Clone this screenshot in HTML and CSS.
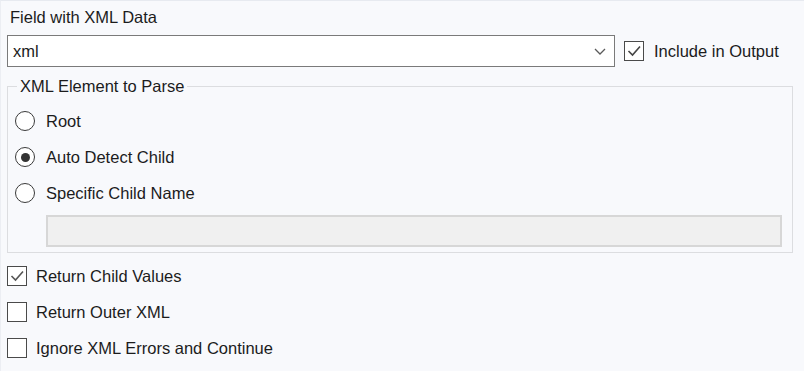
FILE: index.html
```html
<!DOCTYPE html>
<html>
<head>
<meta charset="utf-8">
<link rel="stylesheet" href="styles.css">
</head>
<body>
<div class="panel">
  <div class="field-label">Field with XML Data</div>
  <div class="combo-row">
    <div class="combo">
      <span class="combo-value">xml</span>
      <svg class="chevron" width="12" height="7" viewBox="0 0 12 7"><polyline points="1,1 6,6 11,1" fill="none" stroke="#5a5a5a" stroke-width="1.3"/></svg>
    </div>
    <label class="check">
      <span class="box"><svg width="18" height="18" viewBox="0 0 18 18"><polyline points="3.5,9 7.5,13 15,4.5" fill="none" stroke="#444" stroke-width="1.6"/></svg></span>
      <span class="check-text">Include in Output</span>
    </label>
  </div>
  <fieldset class="group">
    <legend class="group-title">XML Element to Parse</legend>
    <div class="radio"><span class="circle"></span><span class="radio-text">Root</span></div>
    <div class="radio"><span class="circle on"></span><span class="radio-text">Auto Detect Child</span></div>
    <div class="radio"><span class="circle"></span><span class="radio-text">Specific Child Name</span></div>
    <div class="child-input"></div>
  </fieldset>
  <div class="options">
    <label class="check">
      <span class="box"><svg width="18" height="18" viewBox="0 0 18 18"><polyline points="3.5,9 7.5,13 15,4.5" fill="none" stroke="#555" stroke-width="1.6"/></svg></span>
      <span class="check-text">Return Child Values</span>
    </label>
    <label class="check">
      <span class="box"></span>
      <span class="check-text">Return Outer XML</span>
    </label>
    <label class="check">
      <span class="box"></span>
      <span class="check-text">Ignore XML Errors and Continue</span>
    </label>
  </div>
</div>
</body>
</html>
```
FILE: styles.css
```css
html, body {
  margin: 0;
  padding: 0;
  background: #f8f9fc;
}
body {
  width: 804px;
  height: 371px;
  overflow: hidden;
  font-family: "Liberation Sans", Arial, sans-serif;
  font-size: 16.5px;
  color: #1c1c1c;
}
.panel {
  box-sizing: border-box;
  height: 371px;
  border-top: 1px solid #e7eaf0;
  border-left: 1px solid #eceef3;
  padding: 0 0 0 6px;
}
.field-label {
  margin-left: 3px;
  height: 18px;
  line-height: 18px;
  margin-top: 7px;
}
.combo-row {
  display: flex;
  align-items: center;
  margin-top: 9px;
  height: 32px;
}
.combo {
  box-sizing: border-box;
  width: 608px;
  height: 32px;
  background: #fff;
  border: 1px solid #7a7a7a;
  display: flex;
  align-items: center;
  padding-left: 5px;
}
.combo-value {
  flex: 1;
}
.chevron {
  margin-right: 8px;
}
.check {
  display: flex;
  align-items: center;
}
.combo-row .check {
  margin-left: 9px;
}
.box {
  box-sizing: border-box;
  width: 20px;
  height: 20px;
  border: 1.5px solid #4a4a4a;
  background: #fff;
  display: flex;
  align-items: center;
  justify-content: center;
}
.check-text {
  margin-left: 10px;
}
.options .check-text {
  margin-left: 9px;
}
.group {
  box-sizing: border-box;
  margin: 10px 0 0 0;
  width: 786px;
  height: 176px;
  padding: 0 0 0 7px;
  border: 1px solid #dcdde0;
}
.group-title {
  padding: 0 3px;
  margin-left: 2px;
  line-height: 18px;
}
.radio {
  display: flex;
  align-items: center;
  height: 36px;
}
.radio:first-of-type {
  margin-top: 8px;
}
.circle {
  box-sizing: border-box;
  width: 20px;
  height: 20px;
  border-radius: 50%;
  border: 1.5px solid #3a3a3a;
  background: #fff;
  display: flex;
  align-items: center;
  justify-content: center;
}
.circle.on::after {
  content: "";
  width: 9px;
  height: 9px;
  border-radius: 50%;
  background: #333;
}
.radio-text {
  margin-left: 11px;
}
.child-input {
  box-sizing: border-box;
  margin: 4px 0 0 31px;
  width: 736px;
  height: 32px;
  background: #f0f0f0;
  border: 2px solid #d7d7d7;
}
.options {
  margin-top: 5px;
}
.options .check {
  height: 36px;
}
```
